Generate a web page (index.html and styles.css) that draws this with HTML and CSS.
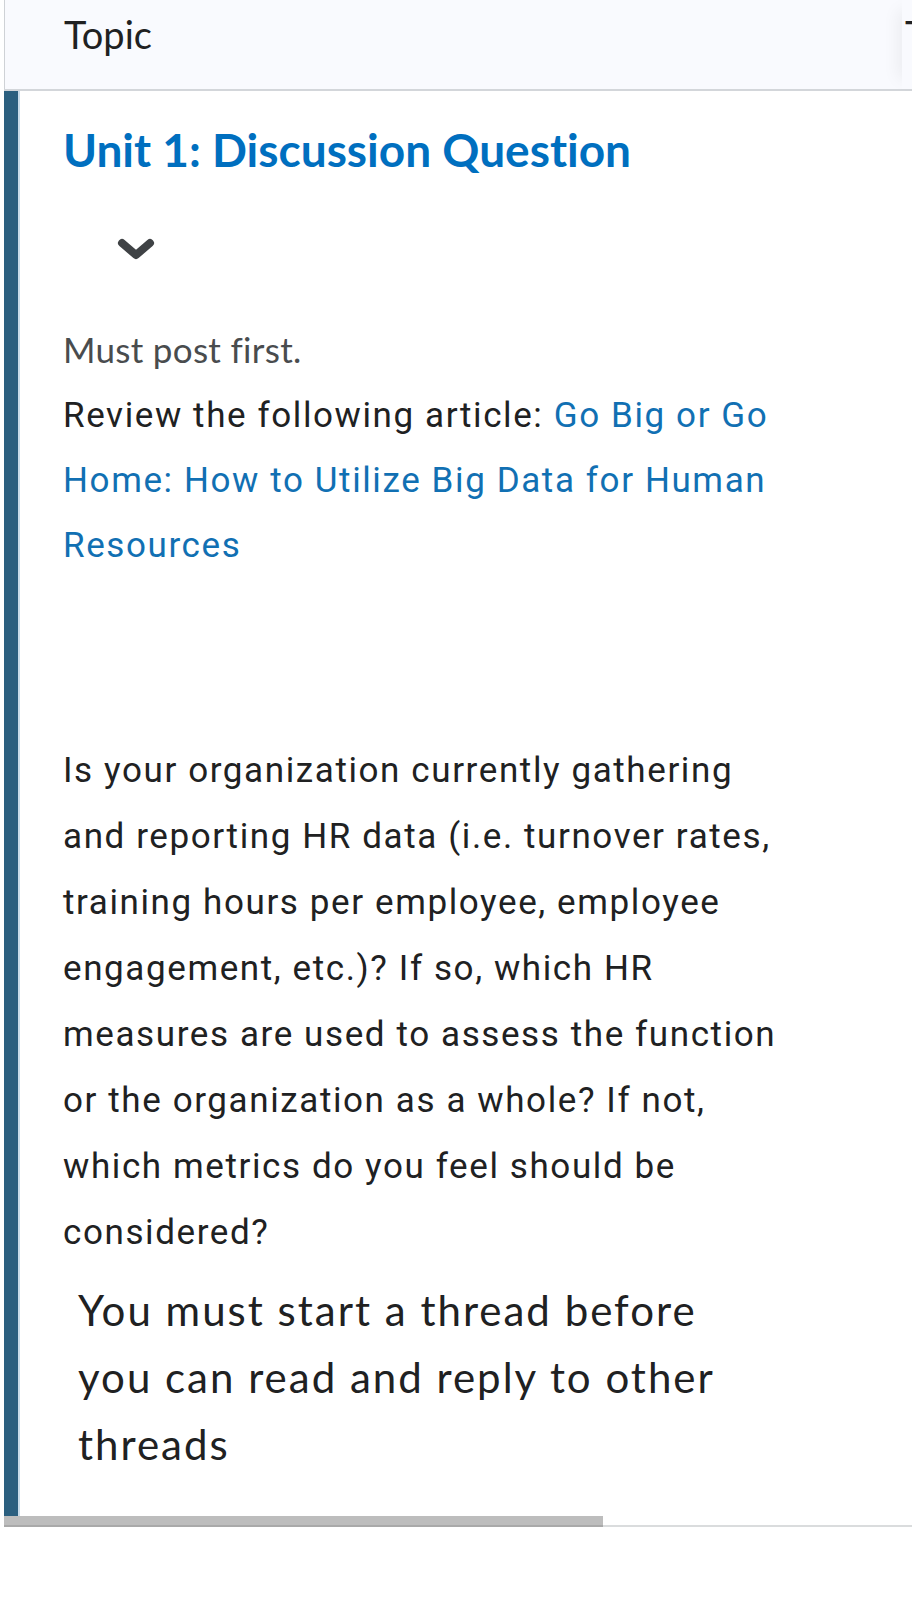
FILE: index.html
```html
<!DOCTYPE html>
<html lang="en">
<head>
<meta charset="utf-8">
<title>Unit 1: Discussion Question</title>
<link rel="stylesheet" href="styles.css">
</head>
<body>
<div class="scroller">
  <div class="table">
    <div class="thead">
      <div class="th th-topic">Topic</div>
      <div class="th th-next">Threads</div>
    </div>
    <div class="card">
      <h1 class="title">Unit 1: Discussion Question</h1>
      <button class="toggle" type="button" aria-label="Expand">
        <svg width="38" height="23" viewBox="0 0 38 23" aria-hidden="true">
          <path d="M5 5 L19 17 L33 5" fill="none" stroke="#3f4245" stroke-width="8" stroke-linecap="round" stroke-linejoin="round"/>
        </svg>
      </button>
      <div class="content">
        <p class="must">Must post first.</p>
        <p class="body review">Review the following article: <a href="#">Go Big or Go Home: How to Utilize Big Data for Human Resources</a></p>
        <p class="body question">Is your organization currently gathering and reporting HR data (i.e. turnover rates, training hours per employee, employee engagement, etc.)? If so, which HR measures are used to assess the function or the organization as a whole? If not, which metrics do you feel should be considered?</p>
        <p class="notice">You must start a thread before you can read and reply to other threads</p>
      </div>
    </div>
    <div class="scrollbar"><div class="thumb"></div></div>
  </div>
</div>
</body>
</html>
```
FILE: styles.css
```css
html, body {
  margin: 0;
  padding: 0;
  background: #ffffff;
}

body {
  width: 912px;
  height: 1611px;
  overflow: hidden;
  font-family: "Lato", "Noto Sans", sans-serif;
  font-variant-ligatures: none;
  color: #202122;
}

.scroller {
  margin-left: 4px;
  width: 908px;
  overflow: hidden;
}

.table {
  width: 1400px;
}

.thead {
  display: flex;
  height: 89px;
  border-bottom: 2px solid #d3d6da;
  background: #f9fafe;
}

.th {
  box-sizing: border-box;
  padding-top: 12px;
  font-family: "Lato", sans-serif;
  font-size: 38px;
  line-height: 44px;
  color: #202122;
  white-space: nowrap;
}

.th-topic {
  width: 898px;
  padding-left: 59px;
  border-left: 1px solid #cfd2d6;
}

.th-next {
  flex: 1;
  padding-left: 3px;
  box-shadow: -14px 0 16px -10px rgba(0, 0, 0, 0.06);
}

.card {
  border-left: 14px solid #2b5f7f;
  box-shadow: inset 2px 0 0 #c9dcea;
  padding-left: 45px;
  padding-top: 31px;
  padding-bottom: 38px;
}

.title {
  margin: 0;
  font-family: "Lato", sans-serif;
  font-weight: 700;
  font-size: 46px;
  line-height: 56px;
  color: #006fbf;
}

.toggle {
  display: block;
  margin: 60px 0 0 54px;
  padding: 0;
  border: 0;
  background: transparent;
  width: 38px;
  height: 23px;
}

.toggle svg {
  display: block;
}

.content {
  width: 720px;
  margin-top: 66px;
}

.content p {
  margin: 0;
}

.must {
  font-family: "Lato", sans-serif;
  font-size: 35px;
  line-height: 44px;
  color: #494c4e;
  letter-spacing: 0.3px;
}

.body {
  font-family: "Roboto", sans-serif;
  font-size: 35px;
  letter-spacing: 1.6px;
  color: #202122;
}

.review {
  line-height: 65px;
  margin-top: 12px !important;
}

.review a {
  color: #1170b3;
  text-decoration: none;
}

.question {
  line-height: 66px;
  margin-top: 160px !important;
}

.notice {
  margin-top: 11px !important;
  margin-left: 15px !important;
  width: 665px;
  font-family: "Lato", sans-serif;
  font-size: 42px;
  letter-spacing: 2px;
  line-height: 67px;
  color: #202122;
}

.scrollbar {
  height: 9px;
  border-bottom: 2px solid #dadcdd;
}

.thumb {
  width: 599px;
  height: 11px;
  background: linear-gradient(#bdbdbd 0, #bdbdbd 9px, #a9a9a9 9px);
}
```
